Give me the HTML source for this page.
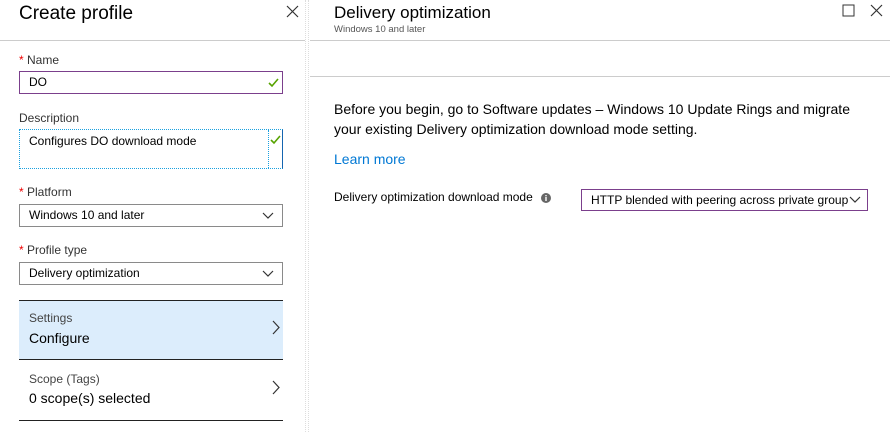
<!DOCTYPE html>
<html><head><style>
*{margin:0;padding:0;box-sizing:border-box}
body{width:890px;height:432px;background:#fff;font-family:"Segoe UI","Liberation Sans",sans-serif;color:#000;position:relative;overflow:hidden}
.a{position:absolute;white-space:nowrap}
.lbl{font-size:12px;color:#333}
.req{color:#e00;font-size:12px}
.box{position:absolute;border:1px solid #8a8a8a;font-size:12px;padding-left:9px;line-height:20px}
</style></head><body>
<div class="a" style="left:19px;top:3px;font-size:19px;">Create profile</div>
<svg class="a" style="left:286px;top:5px" width="13" height="13"><path d="M1 1L12 12M12 1L1 12" stroke="#333" stroke-width="1.2"/></svg>
<div class="a" style="left:0;top:40px;width:305px;height:1px;background:#ccc"></div>
<div class="a" style="left:305px;top:0;width:4px;height:432px;border-left:1px dotted #ddd;border-right:1px dotted #ddd"></div>

<div class="a lbl" style="left:19px;top:53px"><span class="req">*</span> Name</div>
<div class="box" style="left:19px;top:71px;width:264px;height:23px;border-color:#7b3f8c">DO</div>
<svg class="a" style="left:268px;top:78px" width="11" height="10"><path d="M1 5L4 8L10 1" stroke="#57a300" stroke-width="1.6" fill="none"/></svg>

<div class="a lbl" style="left:19px;top:111px">Description</div>
<div class="box" style="left:19px;top:129px;width:264px;height:40px;border:1px solid #1565b0;border-left:1px dotted #1aa1e0;border-top:1px dotted #1aa1e0;border-bottom:1px dotted #1aa1e0;padding-top:1px">Configures DO download mode</div>
<div class="a" style="left:268px;top:130px;width:1px;height:38px;border-left:1px dotted #1aa1e0"></div>
<svg class="a" style="left:270px;top:135px" width="11" height="10"><path d="M1 5L4 8L10 1" stroke="#57a300" stroke-width="1.6" fill="none"/></svg>

<div class="a lbl" style="left:19px;top:185px"><span class="req">*</span> Platform</div>
<div class="box" style="left:19px;top:204px;width:264px;height:23px">Windows 10 and later</div>
<svg class="a" style="left:262px;top:212px" width="12" height="7"><path d="M1 1L6 6L11 1" stroke="#333" stroke-width="1.2" fill="none"/></svg>

<div class="a lbl" style="left:19px;top:243px"><span class="req">*</span> Profile type</div>
<div class="box" style="left:19px;top:262px;width:264px;height:23px">Delivery optimization</div>
<svg class="a" style="left:262px;top:270px" width="12" height="7"><path d="M1 1L6 6L11 1" stroke="#333" stroke-width="1.2" fill="none"/></svg>

<div class="a" style="left:19px;top:300px;width:264px;height:60px;background:#dcedfc;border-top:1px solid #222;border-bottom:1px solid #222"></div>
<div class="a lbl" style="left:29px;top:311px;color:#444">Settings</div>
<div class="a" style="left:29px;top:330px;font-size:14px">Configure</div>
<svg class="a" style="left:272px;top:320px" width="8" height="15"><path d="M1 1L7 7.5L1 14" stroke="#333" stroke-width="1.2" fill="none"/></svg>
<div class="a lbl" style="left:29px;top:372px;color:#444">Scope (Tags)</div>
<div class="a" style="left:29px;top:390px;font-size:14px">0 scope(s) selected</div>
<svg class="a" style="left:272px;top:380px" width="8" height="15"><path d="M1 1L7 7.5L1 14" stroke="#333" stroke-width="1.2" fill="none"/></svg>
<div class="a" style="left:19px;top:420px;width:264px;height:1px;background:#222"></div>

<div class="a" style="left:334px;top:3px;font-size:17px">Delivery optimization</div>
<div class="a" style="left:334px;top:24px;font-size:9.5px;color:#555">Windows 10 and later</div>
<svg class="a" style="left:842px;top:4px" width="13" height="13"><rect x="1" y="1" width="11" height="11" stroke="#333" fill="none"/></svg>
<svg class="a" style="left:870px;top:4px" width="13" height="13"><path d="M1 1L12 12M12 1L1 12" stroke="#333" stroke-width="1.2"/></svg>
<div class="a" style="left:310px;top:40px;width:580px;height:1px;background:#ccc"></div>
<div class="a" style="left:310px;top:76px;width:580px;height:1px;background:#ccc"></div>
<div class="a" style="left:334px;top:99px;font-size:14px;line-height:20px">Before you begin, go to Software updates – Windows 10 Update Rings and migrate<br>your existing Delivery optimization download mode setting.</div>
<div class="a" style="left:334px;top:151px;font-size:14px;color:#0078d4">Learn more</div>
<div class="a" style="left:334px;top:190px;font-size:12px">Delivery optimization download mode</div>
<svg class="a" style="left:541px;top:193px" width="10" height="10"><circle cx="5" cy="5" r="5" fill="#666"/><rect x="4.3" y="4" width="1.4" height="4" fill="#fff"/><rect x="4.3" y="2" width="1.4" height="1.3" fill="#fff"/></svg>
<div class="box" style="left:581px;top:189px;width:287px;height:22px;border-color:#7b3f8c;padding-left:9px;line-height:20px">HTTP blended with peering across private group</div>
<svg class="a" style="left:849px;top:196px" width="12" height="7"><path d="M1 1L6 6L11 1" stroke="#333" stroke-width="1.2" fill="none"/></svg>
</body></html>
